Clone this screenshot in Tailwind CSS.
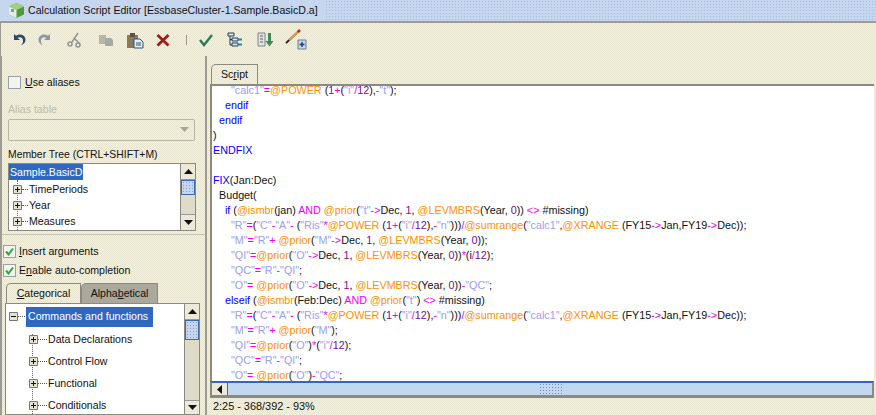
<!DOCTYPE html>
<html lang="en">
<head>
  <meta charset="utf-8" />
  <title>Calculation Script Editor</title>
  <script src="https://cdn.jsdelivr.net/npm/@tailwindcss/browser@4"></script>
</head>
<body class="bg-white">
<div class="w-[876px] h-[415px] overflow-hidden flex flex-col text-[10.6px] leading-none text-[#111] font-['Liberation_Sans',sans-serif] bg-[conic-gradient(#f5f1e2_25%,#e7e4d0_0_50%,#f5f1e2_0_75%,#e7e4d0_0)] bg-[length:2px_2px]">

  <!-- title bar -->
  <div class="h-[23px] shrink-0 flex items-center bg-[#c6d6ee] border-b-2 border-[#9c9c94] pl-[8px]">
    <svg class="w-[17px] h-[17px] shrink-0" viewBox="0 0 17 17">
      <path d="M8.5 1 16 4.5v8L8.5 16 1 12.500v-8z" fill="#4f9a3c"/>
      <path d="M8.500 1 16 4.500 8.500 8 1 4.500z" fill="#9fd07a"/>
      <path d="M1 4.500 8.500 8v8L1 12.500z" fill="#e4efe0"/>
      <path d="M3 7h3v3H3z" fill="#5aa5c8"/>
    </svg>
    <span class="ml-[3px] w-[297px] whitespace-nowrap">Calculation Script Editor [EssbaseCluster-1.Sample.BasicD.a]</span>
    <div class="flex-1 h-full bg-[radial-gradient(#a3bce0_40%,transparent_45%)] bg-[length:3px_3px]"></div>
  </div>

  <!-- toolbar -->
  <div class="h-[33px] shrink-0 flex items-center border-l border-[#9c9c94] pl-[10px]">
    <svg class="w-[16px] h-[16px] mr-[10px]" viewBox="0 0 16 16"><path d="M3 2v6h6L6.500 5.800c3-1.600 6-.2 5.500 4-.2 1.500-1 2.700-2 3.500 3.600-1 5-4.300 4.300-7C13 2.500 8.500 1.500 5 3.800z" fill="#2c4a68"/></svg>
    <svg class="w-[16px] h-[16px] mr-[13px]" viewBox="0 0 16 16"><path d="M13 2v6H7l2.500-2.200c-3-1.600-6-.2-5.500 4 .2 1.500 1 2.700 2 3.500-3.600-1-5-4.300-4.300-7C3 2.500 7.500 1.500 11 3.800z" fill="#8b98a3"/></svg>
    <svg class="w-[16px] h-[16px] mr-[16px]" viewBox="0 0 16 16" fill="none" stroke="#8d949a" stroke-width="1.500"><path d="M12 1 6 10M8 6l5 5"/><circle cx="4" cy="12" r="2"/><circle cx="12" cy="13" r="2"/></svg>
    <svg class="w-[16px] h-[16px] mr-[12px]" viewBox="0 0 16 16"><path d="M1 3h7v9H1z" fill="#b9b6a8"/><path d="M7 6h6l2 2v6H7z" fill="#a3aaa8"/></svg>
    <svg class="w-[18px] h-[18px] mr-[12px]" viewBox="0 0 18 18"><path d="M1 4h11v13H1z" fill="#8a7a5c"/><path d="M4 2h5v4H4z" fill="#5c5240"/><path d="M8 8h6l3 3v6H8z" fill="#e8eef4" stroke="#2f5573"/><path d="M10 12h5M10 14h5" stroke="#2f5573"/></svg>
    <svg class="w-[14px] h-[14px] mr-[16px]" viewBox="0 0 14 14"><path d="M1.500 2 12.500 12.500M12.500 2 1.500 12.500" stroke="#9c1c1c" stroke-width="2.800"/></svg>
    <div class="w-px h-[10px] bg-[#999] mr-[12px]"></div>
    <svg class="w-[14px] h-[14px] mr-[14px]" viewBox="0 0 14 14"><path d="M1 7l4 5 8-10" fill="none" stroke="#2d7a56" stroke-width="2.400"/></svg>
    <svg class="w-[16px] h-[16px] mr-[14px]" viewBox="0 0 16 16"><path d="M1 1h6v3H1zM5 6h6v3H5zM5 11h6v3H5z" fill="#dfe7ee" stroke="#1f3f5c"/><path d="M3 4v9h2M3 7.500h2" fill="none" stroke="#1f3f5c"/><path d="M11 7.500h4M11 12.500h4" stroke="#2a86a8" stroke-width="2"/></svg>
    <svg class="w-[17px] h-[17px] mr-[11px]" viewBox="0 0 17 17"><path d="M1 2h7v13H1z" fill="#dfe3e6" stroke="#7b8388"/><path d="M3 5h3M3 8h3M3 11h3" stroke="#5a6268"/><path d="M11 2h3v8h2.500l-4 5.500-4-5.500H11z" fill="#3f8a5c"/></svg>
    <svg class="w-[22px] h-[21px]" viewBox="0 0 22 21"><path d="M1 14 14 2" stroke="#222" stroke-width="1.800"/><path d="M4 11 13 3" stroke="#e0a03a" stroke-width="2"/><path d="M13 3l2-2" stroke="#b0302a" stroke-width="2.500"/><path d="M13 11h8v9h-8z" fill="#c5d9ec" stroke="#6a7f94"/><path d="M17 13v5M14.500 15.500h5" stroke="#1f3f7c" stroke-width="1.500"/></svg>
  </div>

  <div class="flex-1 min-h-0 flex">
    <!-- left column -->
    <div class="w-[205px] shrink-0 flex flex-col border-l-2 border-[#9c9c94]">
      <div class="h-[179px] shrink-0 pl-[6px] pr-[8px] border-b border-[#c4c2b2]">
        <label class="flex items-center mt-[19px] h-[14px]">
          <span class="w-[13px] h-[13px] border border-[#9aa0a6] bg-[#f4f4ee]"></span>
          <span class="ml-[4px]"><span class="underline">U</span>se aliases</span>
        </label>
        <div class="mt-[15px] text-[#bdbbab]">Alias table</div>
        <div class="mt-[4px] h-[22px] w-[187px] border border-[#b6b5a6] rounded-[2px] flex items-center justify-end pr-[5px]">
          <svg class="w-[9px] h-[5px]" viewBox="0 0 9 5"><path d="M0 0h9L4.500 5z" fill="#a8a698"/></svg>
        </div>
        <div class="mt-[9px] text-[10.4px] whitespace-nowrap">Member Tree (CTRL+SHIFT+M)</div>
        <div class="mt-[3px] h-[68px] w-[188px] border border-[#8a8a80] bg-white flex">
          <div class="relative flex-1 overflow-hidden">
            <div class="h-[16px] mb-px w-[74px] bg-[#2f68c0] text-white flex items-center pl-[1px]">Sample.BasicD</div>
            <div class="absolute left-[8px] top-[16px] h-[60px] border-l border-dotted border-[#4a7a4a]"></div>
            <div class="h-[16px] flex items-center pl-[4px]">
              <svg class="relative w-[9px] h-[9px]" viewBox="0 0 9 9"><path d="M.5.5h8v8h-8z" fill="#e6e3d4" stroke="#777"/><path d="M2 4.500h5M4.500 2v5" stroke="#111"/></svg>
              <span class="w-[6px] border-t border-dotted border-[#555] mr-px"></span>TimePeriods
            </div>
            <div class="h-[16px] flex items-center pl-[4px]">
              <svg class="relative w-[9px] h-[9px]" viewBox="0 0 9 9"><path d="M.5.5h8v8h-8z" fill="#e6e3d4" stroke="#777"/><path d="M2 4.500h5M4.500 2v5" stroke="#111"/></svg>
              <span class="w-[6px] border-t border-dotted border-[#555] mr-px"></span>Year
            </div>
            <div class="h-[16px] flex items-center pl-[4px]">
              <svg class="relative w-[9px] h-[9px]" viewBox="0 0 9 9"><path d="M.5.5h8v8h-8z" fill="#e6e3d4" stroke="#777"/><path d="M2 4.500h5M4.500 2v5" stroke="#111"/></svg>
              <span class="w-[6px] border-t border-dotted border-[#555] mr-px"></span>Measures
            </div>
          </div>
          <div class="w-[15px] shrink-0 flex flex-col border-l border-[#8a8a80] bg-[#dedbc9]">
            <div class="h-[16px] bg-[#ece9d8] border-b border-[#999] flex items-center justify-center"><svg class="w-[9px] h-[5px]" viewBox="0 0 9 5"><path d="M0 5h9L4.500 0z" fill="#111"/></svg></div>
            <div class="h-[15px] bg-[#c6d6ee] border border-[#3c68b0] bg-[radial-gradient(#7f9fd0_40%,transparent_45%)] bg-[length:3px_3px]"></div>
            <div class="flex-1"></div>
            <div class="h-[16px] bg-[#ece9d8] border-t border-[#999] flex items-center justify-center"><svg class="w-[9px] h-[5px]" viewBox="0 0 9 5"><path d="M0 0h9L4.500 5z" fill="#111"/></svg></div>
          </div>
        </div>
      </div>

      <div class="flex-1 min-h-0 flex flex-col pl-[1px] pr-[4px]">
        <label class="flex items-center mt-[9px] h-[14px]">
          <span class="w-[13px] h-[13px] border border-[#9aa0a6] bg-[#f4f4ee] flex items-center justify-center"><svg class="w-[9px] h-[9px]" viewBox="0 0 9 9"><path d="M1 4.500 3.500 7.500 8 1.500" fill="none" stroke="#2fa83a" stroke-width="2"/></svg></span>
          <span class="ml-[3px]"><span class="underline">I</span>nsert arguments</span>
        </label>
        <label class="flex items-center mt-[5px] h-[14px]">
          <span class="w-[13px] h-[13px] border border-[#9aa0a6] bg-[#f4f4ee] flex items-center justify-center"><svg class="w-[9px] h-[9px]" viewBox="0 0 9 9"><path d="M1 4.500 3.500 7.500 8 1.500" fill="none" stroke="#2fa83a" stroke-width="2"/></svg></span>
          <span class="ml-[3px]">E<span class="underline">n</span>able auto-completion</span>
        </label>
        <div class="flex mt-[6px] ml-[3px] h-[20px] shrink-0">
          <div class="w-[75px] flex items-center justify-center border border-b-0 border-[#8a8a80] rounded-tl-[5px]"><span><span class="underline">C</span>ategorical</span></div>
          <div class="w-[77px] flex items-center justify-center border border-b-0 border-[#8a8a80] rounded-tl-[5px] bg-[#aaa99c]"><span>Alpha<span class="underline">b</span>etical</span></div>
        </div>
        <div class="flex-1 min-h-0 ml-[2px] w-[195px] border border-[#8a8a80] bg-white flex">
          <div class="relative flex-1 overflow-hidden pt-px">
            <div class="absolute left-[26px] top-[30px] h-[90px] border-l border-dotted border-[#4a7a4a]"></div>
            <div class="h-[23px] flex items-center pl-[3px]">
              <svg class="relative w-[9px] h-[9px]" viewBox="0 0 9 9"><path d="M.5.5h8v8h-8z" fill="#e6e3d4" stroke="#777"/><path d="M2 4.500h5" stroke="#111"/></svg>
              <span class="w-[7px] border-t border-dotted border-[#555]"></span>
              <span class="ml-px h-[20px] w-[127px] bg-[#2f68c0] text-white flex items-center pl-[2px] whitespace-nowrap">Commands and functions</span>
            </div>
            <div class="h-[22px] flex items-center pl-[23px]">
              <svg class="relative w-[9px] h-[9px]" viewBox="0 0 9 9"><path d="M.5.5h8v8h-8z" fill="#e6e3d4" stroke="#777"/><path d="M2 4.500h5M4.500 2v5" stroke="#111"/></svg>
              <span class="w-[9px] border-t border-dotted border-[#555] mr-[1px]"></span>Data Declarations
            </div>
            <div class="h-[22px] flex items-center pl-[23px]">
              <svg class="relative w-[9px] h-[9px]" viewBox="0 0 9 9"><path d="M.5.5h8v8h-8z" fill="#e6e3d4" stroke="#777"/><path d="M2 4.500h5M4.500 2v5" stroke="#111"/></svg>
              <span class="w-[9px] border-t border-dotted border-[#555] mr-[1px]"></span>Control Flow
            </div>
            <div class="h-[22px] flex items-center pl-[23px]">
              <svg class="relative w-[9px] h-[9px]" viewBox="0 0 9 9"><path d="M.5.5h8v8h-8z" fill="#e6e3d4" stroke="#777"/><path d="M2 4.500h5M4.500 2v5" stroke="#111"/></svg>
              <span class="w-[9px] border-t border-dotted border-[#555] mr-[1px]"></span>Functional
            </div>
            <div class="h-[22px] flex items-center pl-[23px]">
              <svg class="relative w-[9px] h-[9px]" viewBox="0 0 9 9"><path d="M.5.5h8v8h-8z" fill="#e6e3d4" stroke="#777"/><path d="M2 4.500h5M4.500 2v5" stroke="#111"/></svg>
              <span class="w-[9px] border-t border-dotted border-[#555] mr-[1px]"></span>Conditionals
            </div>
          </div>
          <div class="w-[15px] shrink-0 flex flex-col border-l border-[#8a8a80] bg-[#dedbc9]">
            <div class="h-[16px] bg-[#ece9d8] border-b border-[#999] flex items-center justify-center"><svg class="w-[9px] h-[5px]" viewBox="0 0 9 5"><path d="M0 5h9L4.500 0z" fill="#111"/></svg></div>
            <div class="h-[20px] bg-[#c6d6ee] border border-[#3c68b0] bg-[radial-gradient(#7f9fd0_40%,transparent_45%)] bg-[length:3px_3px]"></div>
            <div class="flex-1"></div>
            <div class="h-[14px] bg-[#ece9d8] border-t border-[#999] flex items-center justify-center"><svg class="w-[9px] h-[5px]" viewBox="0 0 9 5"><path d="M0 0h9L4.500 5z" fill="#111"/></svg></div>
          </div>
        </div>
      </div>
    </div>

    <!-- right column -->
    <div class="flex-1 min-w-0 flex flex-col border-l-2 border-[#9c9c94] pl-[3px] pr-[2px]">
      <div class="flex h-[28px] shrink-0 items-end pl-[1px]">
        <div class="w-[47px] h-[20px] flex items-center justify-center border border-b-0 border-[#8a8a80] rounded-tl-[5px]"><span>Sc<span class="underline">r</span>ipt</span></div>
      </div>
      <div class="h-[297px] shrink-0 border-l-2 border-t-2 border-[#8a8a80] bg-white overflow-hidden pl-[1px]">
        <pre id="code" class="font-['Liberation_Sans',sans-serif] text-[10.78px] leading-[15px] text-[#111] -mt-[3px]"></pre>
      </div>
      <div class="h-[16px] shrink-0 flex border-2 border-[#2f68c0] border-b-[#8a8a80] border-r-[#8a8a80] border-l-[#8a8a80] bg-[#c3d7ee]">
        <div class="w-[16px] bg-[#ece9d8] border-r border-[#2f68c0] flex items-center justify-center"><svg class="w-[5px] h-[9px]" viewBox="0 0 5 9"><path d="M5 0v9L0 4.500z" fill="#111"/></svg></div>
        <div class="ml-[311px] w-[23px] bg-[radial-gradient(#6f8fc0_40%,transparent_45%)] bg-[length:3px_3px]"></div>
      </div>
      <div class="flex-1 flex items-center pl-[3px] text-[10.9px] border-t border-[#8a8a80]">2:25 - 368/392 - 93%</div>
    </div>
  </div>
</div>

<script>
  // script text, coloured by a small tokenizer
  const lines = [
    '      "calc1"=@POWER (1+("i"/12),-"t");',
    '    endif',
    '  endif',
    ')',
    'ENDFIX',
    '',
    'FIX(Jan:Dec)',
    '  Budget(',
    '    if (@ismbr(jan) AND @prior("t"->Dec, 1, @LEVMBRS(Year, 0)) <> #missing)',
    '      "R"=("C"-"A"- ("Ris"*@POWER (1+("i"/12),-"n")))/@sumrange("calc1",@XRANGE (FY15->Jan,FY19->Dec));',
    '      "M"="R"+ @prior("M"->Dec, 1, @LEVMBRS(Year, 0));',
    '      "QI"=@prior("O"->Dec, 1, @LEVMBRS(Year, 0))*(i/12);',
    '      "QC"="R"-"QI";',
    '      "O"= @prior("O"->Dec, 1, @LEVMBRS(Year, 0))-"QC";',
    '    elseif (@ismbr(Feb:Dec) AND @prior("t") <> #missing)',
    '      "R"=("C"-"A"- ("Ris"*@POWER (1+("i"/12),-"n")))/@sumrange("calc1",@XRANGE (FY15->Jan,FY19->Dec));',
    '      "M"="R"+ @prior("M");',
    '      "QI"=@prior("O")*("i"/12);',
    '      "QC"="R"-"QI";',
    '      "O"= @prior("O")-"QC";',
  ];
  const colour = tok => {
    if (tok[0] === '"') return 'text-[#9c9cf0]';
    if (tok[0] === '@') return 'text-[#ff9000]';
    if (/^(if|elseif|endif|ENDFIX|FIX)$/.test(tok)) return 'text-[#0000ff]';
    if (/^(AND|->|<>|[-+=*\/])$/.test(tok)) return 'text-[#f000f0]';
    if (/^\d+$/.test(tok)) return 'text-[#7a0a9a]';
    return '';
  };
  document.getElementById('code').innerHTML = lines.map(line =>
    line.replace(/"[^"]*"|@\w+|->|<>|#?\w+|[-+=*\/]/g, tok => {
      const safe = tok.replace(/</g, '&lt;').replace(/>/g, '&gt;');
      const cls = colour(tok);
      return cls ? `<span class="${cls}">${safe}</span>` : safe;
    })
  ).join('\n');
</script>
</body>
</html>
